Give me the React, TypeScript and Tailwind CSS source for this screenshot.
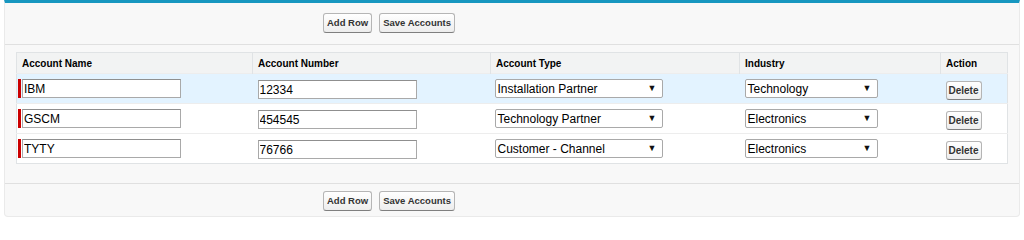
const rows = [
  { name: "IBM", number: "12334", type: "Installation Partner", industry: "Technology" },
  { name: "GSCM", number: "454545", type: "Technology Partner", industry: "Electronics" },
  { name: "TYTY", number: "76766", type: "Customer - Channel", industry: "Electronics" },
];

const font = { fontFamily: '"Liberation Sans", Arial, sans-serif' };

const Btn = ({ label }: { label: string }) => (
  <button className="h-[20px] px-[3px] rounded-[3px] border border-[#b5b5b5] border-b-[#7f7f7f] bg-gradient-to-b from-white to-[#ededed] text-[9.5px] font-bold text-[#333] leading-none">
    {label}
  </button>
);

const ButtonBar = () => (
  <div className="flex gap-[7px] pl-[318px]">
    <Btn label="Add Row" />
    <Btn label="Save Accounts" />
  </div>
);

const FakeSelect = ({ value, width }: { value: string; width: string }) => (
  <div
    className={`${width} h-[19px] flex items-center justify-between pl-[2px] pr-[5px] bg-white border border-[#a9a9a9] rounded-[2px] text-[12px] text-[#000]`}
  >
    <span>{value}</span>
    <span className="text-[9px] text-[#111]">▼</span>
  </div>
);

const App = () => {
  return (
    <div className="w-[1024px] h-[233px] bg-white" style={font}>
      <div className="mx-[4px] bg-[#f8f8f8] border border-[#eaeaea] border-t-[3px] border-t-[#1797c0] rounded-b-[4px]">
        {/* top buttons */}
        <div className="pt-[10px] pb-[11px] border-b border-[#e0e0e0]">
          <ButtonBar />
        </div>

        <div className="px-[11px] pt-[7px] pb-[19px] border-b border-[#e0e0e0]">
          <table className="w-full table-fixed border-collapse bg-white border border-[#e0e3e5]">
            <colgroup>
              <col className="w-[236px]" />
              <col className="w-[238px]" />
              <col className="w-[249px]" />
              <col className="w-[201px]" />
              <col />
            </colgroup>
            <thead>
              <tr className="h-[21px] bg-[#f2f3f3] text-left text-[10px] font-bold text-[#000]">
                <th className="pl-[5px] border-r border-[#e0e3e5]">Account Name</th>
                <th className="pl-[5px] border-r border-[#e0e3e5]">Account Number</th>
                <th className="pl-[5px] border-r border-[#e0e3e5]">Account Type</th>
                <th className="pl-[5px] border-r border-[#e0e3e5]">Industry</th>
                <th className="pl-[5px]">Action</th>
              </tr>
            </thead>
            <tbody>
              {rows.map((row, i) => (
                <tr
                  key={i}
                  className={`h-[30px] border-t border-[#ededed] ${i === 0 ? "bg-[#e3f3ff]" : "bg-white"}`}
                >
                  <td className="pl-[1px]">
                    <div className="flex items-center gap-[1px]">
                      <span className="w-[3px] h-[19px] bg-[#c00]" />
                      <input
                        readOnly
                        value={row.name}
                        className="w-[159px] h-[19px] px-[1px] bg-white border border-[#a9a9a9] border-t-[#8f8f8f] text-[12px] text-[#000] outline-none"
                      />
                    </div>
                  </td>
                  <td className="pl-[5px]">
                    <input
                      readOnly
                      value={row.number}
                      className="w-[159px] h-[19px] px-[1px] bg-white border border-[#a9a9a9] border-t-[#8f8f8f] text-[12px] text-[#000] outline-none"
                    />
                  </td>
                  <td className="pl-[4px]">
                    <FakeSelect value={row.type} width="w-[168px]" />
                  </td>
                  <td className="pl-[5px]">
                    <FakeSelect value={row.industry} width="w-[133px]" />
                  </td>
                  <td className="pl-[5px]">
                    <button className="h-[19px] px-[2px] rounded-[3px] border border-[#b5b5b5] border-b-[#7f7f7f] bg-gradient-to-b from-white to-[#ededed] text-[10px] font-bold text-[#333] leading-none">
                      Delete
                    </button>
                  </td>
                </tr>
              ))}
            </tbody>
          </table>
        </div>

        {/* bottom buttons */}
        <div className="pt-[7px] pb-[5px]">
          <ButtonBar />
        </div>
      </div>
    </div>
  );
};

export default App;
